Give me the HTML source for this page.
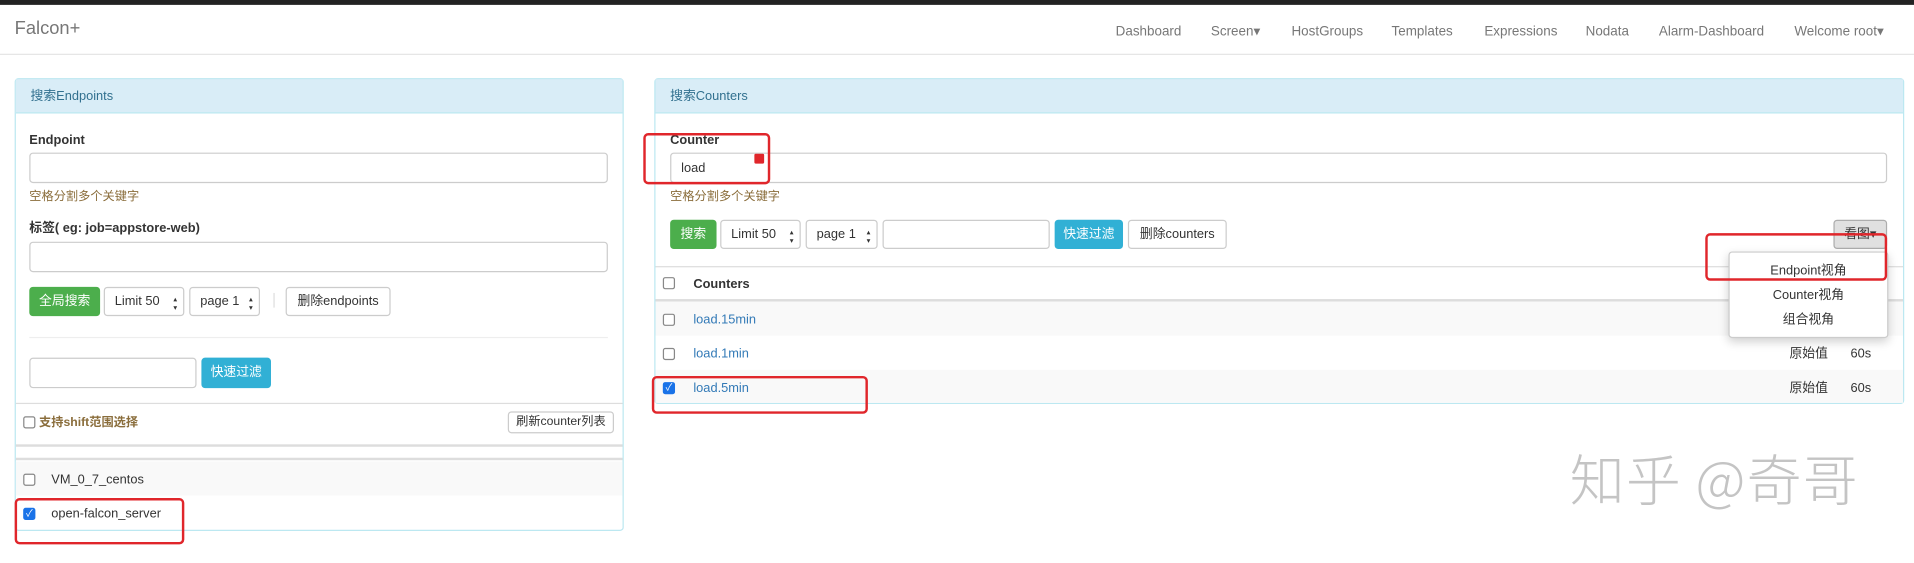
<!DOCTYPE html>
<html><head><meta charset="utf-8">
<style>
*{box-sizing:border-box;margin:0;padding:0}
html,body{width:1914px;height:562px;overflow:hidden;background:#fff}
#s{position:absolute;left:0;top:0;width:1568px;height:461px;transform:scale(1.22066);transform-origin:0 0;font-family:"Liberation Sans","Noto Sans CJK SC",sans-serif;font-size:11px;color:#333;line-height:1.8}
.a{position:absolute}
.nav{color:#777;font-size:11px;top:17px}
.panel{border:1px solid #bce8f1;border-radius:3px;background:#fff}
.ph{background:#d9edf7;color:#31708f;height:28px;border-bottom:1px solid #bce8f1;padding:5px 12px 0;font-size:10.5px}
.inp{border:1px solid #ccc;border-radius:3px;background:#fff}
.lbl{font-weight:bold;font-size:10.5px;color:#333}
.hint{color:#8a6d3b;font-size:10px}
.btn{border:1px solid #ccc;border-radius:3px;background:#fff;font-size:10.5px;text-align:center;line-height:22px;color:#333}
.g{background:#4cae4c;border-color:#4cae4c;color:#fff}
.c{background:#31b0d5;border-color:#31b0d5;color:#fff}
.sel{border:1px solid #ccc;border-radius:3px;background:#fff;font-size:10.5px;line-height:22px;padding-left:8px;color:#333}
.sel:after{content:"▴▾";position:absolute;right:4px;top:0;font-size:6px;line-height:6px;writing-mode:vertical-lr;margin-top:6px}
.cb{width:10px;height:10px;border:1px solid #888;border-radius:2px;background:#fff}
.cbc{width:10px;height:10px;border-radius:2px;background:#1a73e8;color:#fff;font-size:8px;line-height:10px;text-align:center}
.red{border:2px solid #e0262b;border-radius:4px}
.lnk{color:#337ab7;font-size:10.5px}
</style></head><body><div id="s">
<div class="a" style="left:0;top:0;width:1568px;height:4px;background:#222"></div>
<div class="a" style="left:0;top:44px;width:1568px;height:1px;background:#e5e5e5"></div>
<div class="a" style="left:12px;top:15px;font-size:15px;color:#777;line-height:1.2">Falcon+</div>
<div class="a nav" style="left:914px">Dashboard</div>
<div class="a nav" style="left:992px">Screen▾</div>
<div class="a nav" style="left:1058px">HostGroups</div>
<div class="a nav" style="left:1140px">Templates</div>
<div class="a nav" style="left:1216px">Expressions</div>
<div class="a nav" style="left:1299px">Nodata</div>
<div class="a nav" style="left:1359px">Alarm-Dashboard</div>
<div class="a nav" style="left:1470px">Welcome root▾</div>

<!-- left panel -->
<div class="a panel" style="left:12px;top:64px;width:499px;height:371px"></div>
<div class="a ph" style="left:13px;top:65px;width:497px">搜索Endpoints</div>
<div class="a lbl" style="left:24px;top:106px">Endpoint</div>
<div class="a inp" style="left:24px;top:125px;width:474px;height:25px"></div>
<div class="a hint" style="left:24px;top:153px">空格分割多个关键字</div>
<div class="a lbl" style="left:24px;top:178px">标签( eg: job=appstore-web)</div>
<div class="a inp" style="left:24px;top:198px;width:474px;height:25px"></div>
<div class="a btn g" style="left:24px;top:235px;width:58px;height:24px">全局搜索</div>
<div class="a sel" style="left:85px;top:235px;width:66px;height:24px">Limit 50</div>
<div class="a sel" style="left:155px;top:235px;width:58px;height:24px">page 1</div>
<div class="a" style="left:224px;top:240px;width:1px;height:12px;background:#ddd"></div>
<div class="a btn" style="left:234px;top:235px;width:86px;height:24px">删除endpoints</div>
<div class="a" style="left:24px;top:276px;width:474px;height:1px;background:#eee"></div>
<div class="a inp" style="left:24px;top:293px;width:137px;height:25px"></div>
<div class="a btn c" style="left:165px;top:293px;width:57px;height:25px">快速过滤</div>
<div class="a" style="left:13px;top:330px;width:497px;height:1px;background:#ddd"></div>
<div class="a cb" style="left:19px;top:341px"></div>
<div class="a" style="left:32px;top:338px;font-weight:bold;color:#8a6d3b;font-size:10px">支持shift范围选择</div>
<div class="a btn" style="left:416px;top:337px;width:87px;height:18px;line-height:16px;font-size:10px">刷新counter列表</div>
<div class="a" style="left:13px;top:364px;width:497px;height:13px;border-top:2px solid #ddd;border-bottom:2px solid #ddd"></div>
<div class="a" style="left:13px;top:378px;width:497px;height:28px;background:#f9f9f9"></div>
<div class="a cb" style="left:19px;top:388px"></div>
<div class="a" style="left:42px;top:384px;font-size:10.5px">VM_0_7_centos</div>
<div class="a cbc" style="left:19px;top:416px">✓</div>
<div class="a" style="left:42px;top:412px;font-size:10.5px">open-falcon_server</div>
<div class="a red" style="left:12px;top:408px;width:139px;height:38px"></div>

<!-- right panel -->
<div class="a panel" style="left:536px;top:64px;width:1024px;height:267px"></div>
<div class="a ph" style="left:537px;top:65px;width:1022px">搜索Counters</div>
<div class="a lbl" style="left:549px;top:106px">Counter</div>
<div class="a inp" style="left:549px;top:125px;width:997px;height:25px"></div>
<div class="a" style="left:558px;top:129px;font-size:10.5px">load</div>
<div class="a" style="left:618px;top:126px;width:8px;height:8px;background:#e0262b;border-radius:1px"></div>
<div class="a red" style="left:527px;top:109px;width:104px;height:42px"></div>
<div class="a hint" style="left:549px;top:153px">空格分割多个关键字</div>
<div class="a btn g" style="left:549px;top:180px;width:38px;height:24px">搜索</div>
<div class="a sel" style="left:590px;top:180px;width:66px;height:24px">Limit 50</div>
<div class="a sel" style="left:660px;top:180px;width:59px;height:24px">page 1</div>
<div class="a inp" style="left:723px;top:180px;width:137px;height:24px"></div>
<div class="a btn c" style="left:864px;top:180px;width:56px;height:24px">快速过滤</div>
<div class="a btn" style="left:924px;top:180px;width:81px;height:24px">删除counters</div>
<div class="a btn" style="left:1502px;top:180px;width:44px;height:24px;background:#e0e0e0;border-color:#adadad">看图▾</div>
<div class="a" style="left:537px;top:218px;width:1022px;height:1px;background:#ddd"></div>
<div class="a cb" style="left:543px;top:227px"></div>
<div class="a lbl" style="left:568px;top:224px">Counters</div>
<div class="a" style="left:537px;top:245px;width:1022px;height:2px;background:#ddd"></div>
<div class="a" style="left:537px;top:247px;width:1022px;height:28px;background:#f9f9f9"></div>
<div class="a" style="left:537px;top:303px;width:1022px;height:27px;background:#f9f9f9"></div>
<div class="a cb" style="left:543px;top:257px"></div>
<div class="a lnk" style="left:568px;top:253px">load.15min</div>
<div class="a cb" style="left:543px;top:285px"></div>
<div class="a lnk" style="left:568px;top:281px">load.1min</div>
<div class="a cbc" style="left:543px;top:313px">✓</div>
<div class="a lnk" style="left:568px;top:309px">load.5min</div>
<div class="a" style="left:1466px;top:281px;font-size:10.5px">原始值</div>
<div class="a" style="left:1516px;top:281px;font-size:10.5px">60s</div>
<div class="a" style="left:1466px;top:309px;font-size:10.5px">原始值</div>
<div class="a" style="left:1516px;top:309px;font-size:10.5px">60s</div>
<div class="a red" style="left:534px;top:308px;width:177px;height:31px"></div>
<div class="a" style="left:1416px;top:206px;width:131px;height:71px;background:#fff;border:1px solid #ccc;border-radius:3px;box-shadow:0 3px 8px rgba(0,0,0,.18);font-size:10.5px;text-align:center;line-height:14px">
<div style="margin-top:8px">Endpoint视角</div><div style="margin-top:6px">Counter视角</div><div style="margin-top:6px">组合视角</div></div>
<div class="a red" style="left:1397px;top:191px;width:149px;height:39px"></div>

<div class="a" style="left:1286px;top:364px;font-size:45px;color:#c4c4c4;font-family:'Noto Sans CJK SC',sans-serif;font-weight:300;letter-spacing:1px;white-space:nowrap;line-height:1.2">知乎 @奇哥</div>
</div></body></html>
